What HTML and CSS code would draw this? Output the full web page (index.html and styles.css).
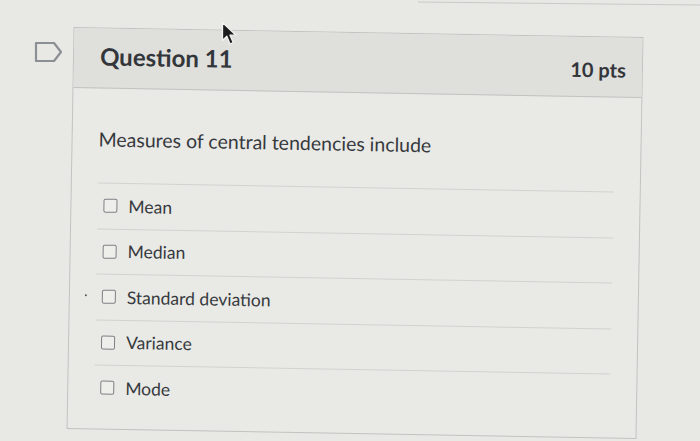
FILE: index.html
```html
<!DOCTYPE html>
<html>
<head>
<meta charset="utf-8">
<link rel="stylesheet" href="styles.css">
</head>
<body>
<div class="prev"></div>
<div class="row">
  <div class="gutter">
    <svg class="flag" width="30" height="22" viewBox="0 0 30 22">
      <path d="M2 2 H20 L27 11 L20 20 H2 Z" fill="none" stroke="#8b9095" stroke-width="2.2" stroke-linejoin="round"/>
    </svg>
  </div>
  <div class="card">
    <div class="card-header">
      <span class="q-title">Question 11</span>
      <span class="q-pts">10 pts</span>
    </div>
    <div class="card-body">
      <div class="q-text">Measures of central tendencies include</div>
      <div class="answers">
        <div class="answer"><span class="box"></span><span class="label">Mean</span></div>
        <div class="answer"><span class="box"></span><span class="label">Median</span></div>
        <div class="answer dotted"><span class="box"></span><span class="label">Standard deviation</span></div>
        <div class="answer"><span class="box"></span><span class="label">Variance</span></div>
        <div class="answer"><span class="box"></span><span class="label">Mode</span></div>
      </div>
    </div>
  </div>
</div>
<svg class="cursor" width="18" height="26" viewBox="0 0 18 26">
  <path d="M1.5 1.5 L1.5 19.5 L5.8 15.3 L9 23 L12.2 21.6 L9 14.2 L15 14.2 Z" fill="#1d1d1f" stroke="#f4f4f2" stroke-width="1.3" stroke-linejoin="round"/>
</svg>
</body>
</html>
```
FILE: styles.css
```css
html, body {
  margin: 0;
  padding: 0;
}
body {
  width: 700px;
  height: 441px;
  overflow: hidden;
  position: relative;
  background: #e8e8e5;
  font-family: Lato, "Open Sans", sans-serif;
  color: #36393d;
}
.prev {
  height: 3px;
  margin-left: 418px;
  border-bottom: 1px solid #c9cac7;
  transform: rotate(0.6deg);
}
.row {
  display: flex;
  margin-top: 28px;
}
.gutter {
  width: 70px;
  flex: none;
}
.flag {
  display: block;
  margin: 9px 0 0 34px;
}
.card {
  width: 570px;
  height: 402px;
  box-sizing: border-box;
  border: 1px solid #c2c3c0;
  background: #e9e9e6;
  transform: rotate(1deg);
  transform-origin: 50% 50%;
}
.card-header {
  height: 60px;
  box-sizing: border-box;
  background: #dfdfdc;
  border-bottom: 1px solid #c2c3c0;
  display: flex;
  align-items: center;
  justify-content: space-between;
  padding: 0 16px 0 26px;
}
.q-title {
  font-weight: 700;
  font-size: 24px;
  color: #33363a;
  margin-bottom: 5px;
}
.q-pts {
  font-weight: 700;
  font-size: 20px;
  color: #33363a;
  margin-top: 5px;
}
.card-body {
  padding: 39px 26px 0 26px;
}
.q-text {
  font-size: 19.5px;
  line-height: 24px;
  margin-bottom: 31px;
}
.answer {
  height: 45.5px;
  box-sizing: border-box;
  border-top: 1px solid #d2d3d0;
  display: flex;
  align-items: center;
  padding-left: 6px;
  position: relative;
}
.box {
  width: 12px;
  height: 12px;
  border: 1.6px solid #7d8083;
  border-radius: 2px;
  background: #eeeeeb;
  margin-right: 11px;
  flex: none;
}
.label {
  font-size: 17.5px;
}
.dotted::before {
  content: "";
  position: absolute;
  left: -11px;
  top: 20px;
  width: 2px;
  height: 2px;
  border-radius: 1px;
  background: #555;
}
.cursor {
  position: absolute;
  left: 221px;
  top: 21px;
}
```
